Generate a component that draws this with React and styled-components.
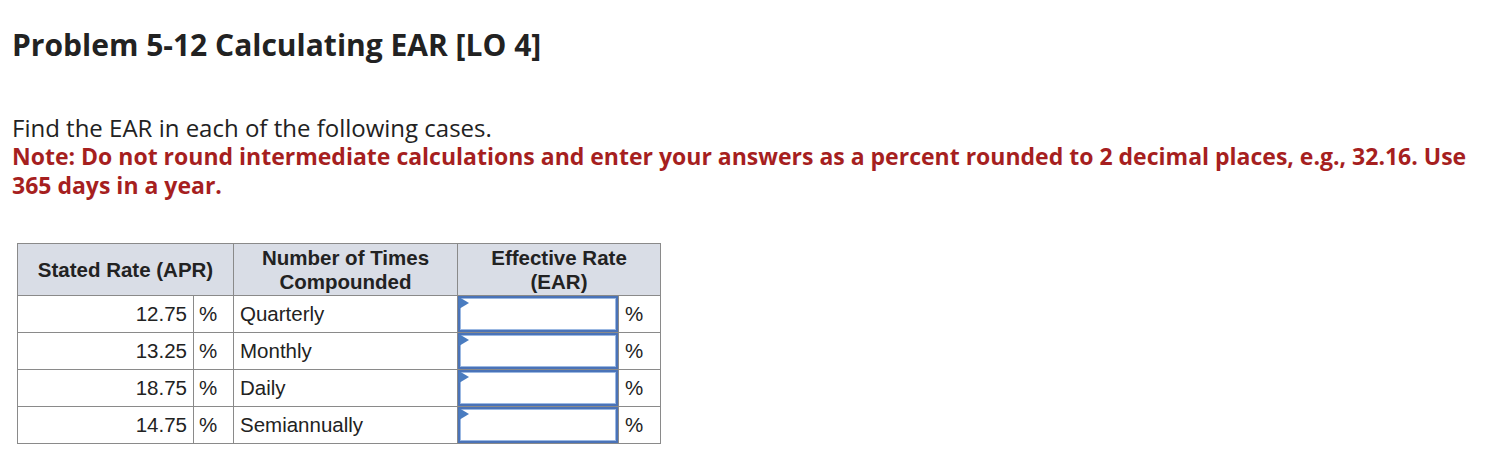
import React from 'react'
import styled, { createGlobalStyle } from 'styled-components'

const GlobalStyle = createGlobalStyle`
    html, body {
        margin: 0;
        padding: 0;
        background: #ffffff;
    }
`;

const Page = styled.div`
    padding: 25px 16px 0 12px;
    font-family: "Open Sans", "Liberation Sans", sans-serif;
    color: #222222;
`;

const Title = styled.h1`
    margin: 0;
    font-size: 30px;
    font-weight: 700;
    line-height: 40px;
`;

const Intro = styled.div`
    margin-top: 48px;
    font-size: 24px;
    line-height: 29px;
`;

const Note = styled.div`
    color: #a61f1f;
    font-size: 23px;
    font-weight: 700;
`;

const Table = styled.table`
    margin: 43px 0 0 5px;
    border-collapse: collapse;
    font-family: "Liberation Sans", Arial, sans-serif;
    font-size: 20.5px;
    color: #222222;
`;

const Th = styled.th`
    background: #d9dde6;
    border: 1px solid #8a8a8a;
    height: 51px;
    padding: 0 6px;
    font-weight: 700;
    line-height: 24px;
    text-align: center;
`;

const Td = styled.td`
    border: 1px solid #8a8a8a;
    height: 35px;
    padding: 0 ${p => p.$pad || 6}px;
    text-align: ${p => p.$align || 'left'};
    width: ${p => p.$w}px;
    box-sizing: border-box;
`;

const InputCell = styled.td`
    border: 1px solid #8a8a8a;
    padding: 0;
    width: 160px;
    height: 35px;
    position: relative;
`;

const Field = styled.input`
    display: block;
    box-sizing: border-box;
    width: 100%;
    height: 36px;
    margin: 0;
    border: 2px solid #4a73b8;
    box-shadow: inset 0 0 0 1px #9bb8e2;
    background: #ffffff;
    outline: none;
`;

const Marker = styled.span`
    position: absolute;
    left: 1px;
    top: 1px;
    width: 0;
    height: 0;
    border-top: 6px solid transparent;
    border-bottom: 6px solid transparent;
    border-left: 10px solid #4a7cc0;
`;

const rows = [
    ['12.75', 'Quarterly'],
    ['13.25', 'Monthly'],
    ['18.75', 'Daily'],
    ['14.75', 'Semiannually'],
]

export default function App() {
    return (
        <Page>
            <GlobalStyle />
            <Title>Problem 5-12 Calculating EAR [LO 4]</Title>
            <Intro>
                <div>Find the EAR in each of the following cases.</div>
                <Note>Note: Do not round intermediate calculations and enter your answers as a percent rounded to 2 decimal places, e.g., 32.16. Use 365 days in a year.</Note>
            </Intro>
            <Table>
                <thead>
                    <tr>
                        <Th colSpan={2}>Stated Rate (APR)</Th>
                        <Th>Number of Times<br />Compounded</Th>
                        <Th colSpan={2}>Effective Rate<br />(EAR)</Th>
                    </tr>
                </thead>
                <tbody>
                    {rows.map(([rate, freq]) => (
                        <tr key={freq}>
                            <Td $w={176} $align='right'>{rate}</Td>
                            <Td $w={40} $pad={5}>%</Td>
                            <Td $w={224}>{freq}</Td>
                            <InputCell>
                                <Field type='text' />
                                <Marker />
                            </InputCell>
                            <Td $w={42} $pad={6}>%</Td>
                        </tr>
                    ))}
                </tbody>
            </Table>
        </Page>
    )
}
